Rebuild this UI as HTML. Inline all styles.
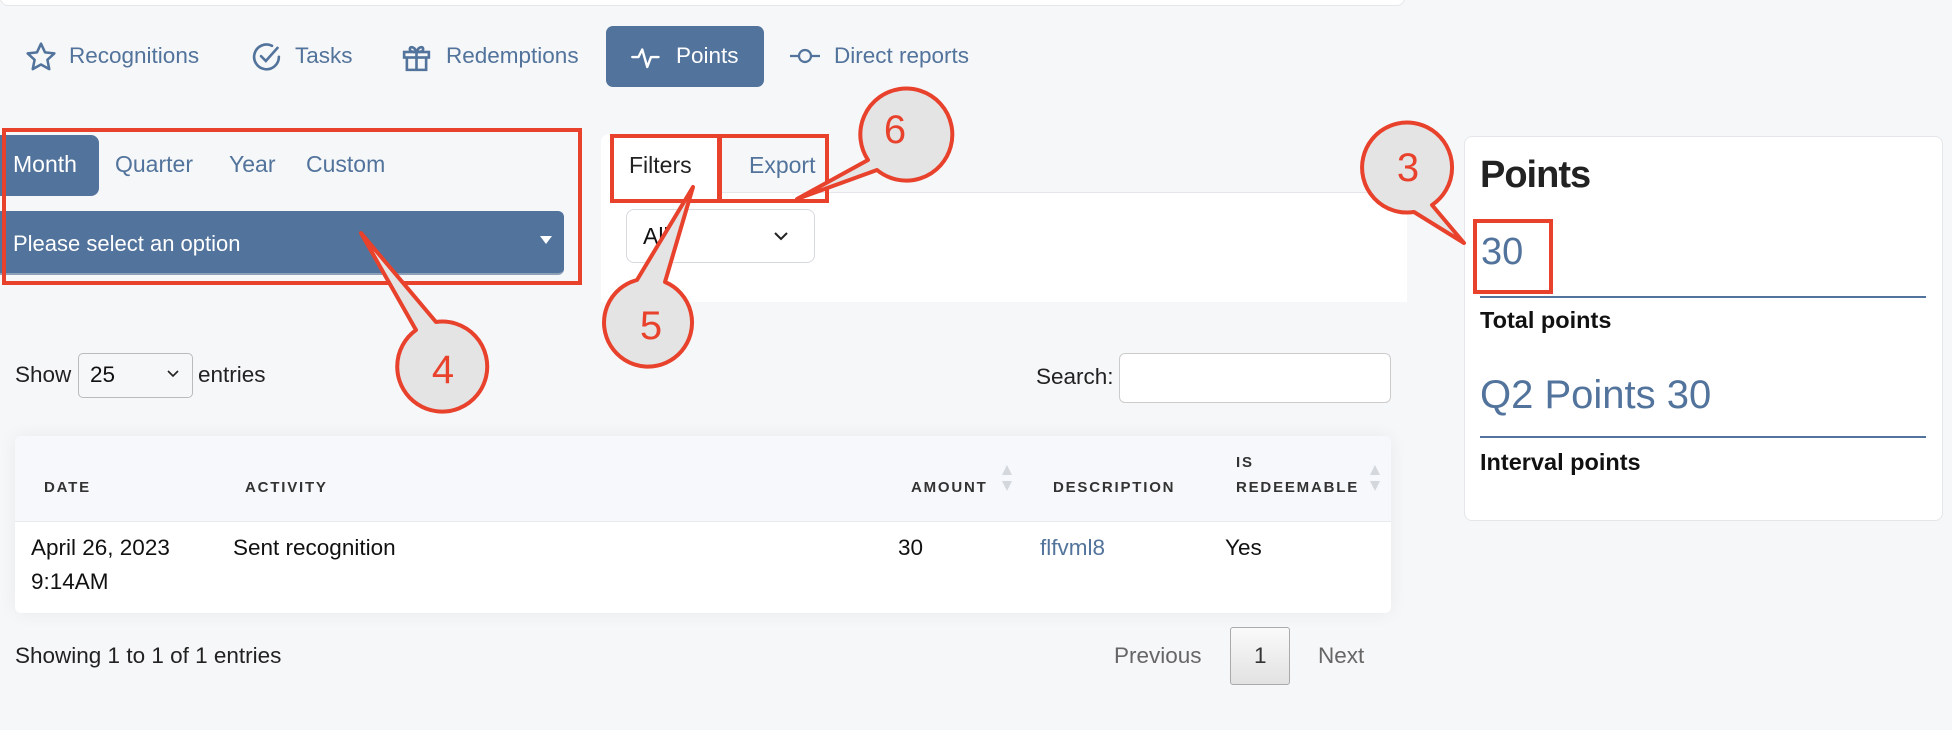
<!DOCTYPE html>
<html><head><meta charset="utf-8"><style>
*{box-sizing:border-box;margin:0;padding:0}
body{width:1952px;height:730px;background:#f6f7f9;font-family:"Liberation Sans",sans-serif;position:relative;overflow:hidden;color:#111}
.a{position:absolute;white-space:nowrap}
.blue{color:#52739b}
.nav{font-size:22.5px;color:#52739b;top:43px}
.th{font-size:15px;font-weight:bold;letter-spacing:1.8px;color:#333}
.td{font-size:22.5px;color:#111}
.rb{position:absolute;border:4px solid #e8412c}
</style></head><body>
<div class="a" style="left:0;top:-10px;width:1405px;height:16px;background:#fff;border:1px solid #e4e6ea;border-radius:8px"></div>

<!-- nav -->
<svg class="a" style="left:25px;top:41px" width="32" height="32" viewBox="0 0 24 24" fill="none" stroke="#52739b" stroke-width="1.9" stroke-linejoin="round"><path d="M12 2l3 6.5 7 .8-5.2 4.8 1.4 7L12 17.6 5.8 21.1l1.4-7L2 9.3l7-.8z"/></svg>
<div class="a nav" style="left:69px">Recognitions</div>
<svg class="a" style="left:250px;top:41px" width="33" height="33" viewBox="0 0 24 24" fill="none" stroke="#52739b" stroke-width="1.9" stroke-linecap="round"><path d="M21 11.5A9 9 0 1 1 16 3.5"/><path d="M8 11l3.5 3.5L20 5"/></svg>
<div class="a nav" style="left:295px">Tasks</div>
<svg class="a" style="left:400px;top:41px" width="33" height="33" viewBox="0 0 24 24" fill="none" stroke="#52739b" stroke-width="1.9"><rect x="3" y="8" width="18" height="4"/><path d="M5 12v9h14v-9M12 8v13M12 8C10 3 6 4 7.5 7 8 8 12 8 12 8zM12 8c2-5 6-4 4.5-1-.5 1-4.5 1-4.5 1z"/></svg>
<div class="a nav" style="left:446px">Redemptions</div>
<div class="a" style="left:606px;top:26px;width:158px;height:61px;background:#52739b;border-radius:7px"></div>
<svg class="a" style="left:630px;top:42px" width="32" height="30" viewBox="0 0 24 24" fill="none" stroke="#fff" stroke-width="1.9" stroke-linejoin="round" stroke-linecap="round"><path d="M1 12h5l3-6 4 14 3-8h6"/></svg>
<div class="a nav" style="left:676px;color:#fff">Points</div>
<svg class="a" style="left:789px;top:44px" width="32" height="24" viewBox="0 0 32 24" fill="none" stroke="#52739b" stroke-width="2.2"><path d="M1 12h8M23 12h8"/><circle cx="16" cy="12" r="6"/></svg>
<div class="a nav" style="left:834px">Direct reports</div>

<!-- period -->
<div class="a" style="left:0;top:135px;width:99px;height:61px;background:#52739b;border-radius:0 8px 8px 0"></div>
<div class="a" style="left:13px;top:151px;font-size:23px;color:#fff">Month</div>
<div class="a blue" style="left:115px;top:151px;font-size:23px">Quarter</div>
<div class="a blue" style="left:229px;top:151px;font-size:23px">Year</div>
<div class="a blue" style="left:306px;top:151px;font-size:23px">Custom</div>
<div class="a" style="left:0;top:211px;width:564px;height:64px;background:#52739b;border-radius:0 6px 6px 0;border-bottom:2px solid #8da0b8"></div>
<div class="a" style="left:13px;top:231px;font-size:22px;color:#fff">Please select an option</div>
<div class="a" style="left:540px;top:236px;width:0;height:0;border-left:6px solid transparent;border-right:6px solid transparent;border-top:8px solid #fff"></div>
<div class="rb" style="left:2px;top:128px;width:580px;height:157px"></div>

<!-- filters card -->
<div class="a" style="left:601px;top:134px;width:806px;height:168px;background:#fff;border-radius:8px 0 0 0"></div>
<div class="a" style="left:720px;top:134px;width:687px;height:59px;background:#f6f7f9;border-bottom:1px solid #e4e6ea"></div>
<div class="a" style="left:629px;top:152px;font-size:23px;color:#222">Filters</div>
<div class="a blue" style="left:749px;top:152px;font-size:23px">Export</div>
<div class="a" style="left:626px;top:209px;width:189px;height:54px;border:1px solid #d6d9de;border-radius:8px;background:#fff"></div>
<div class="a" style="left:643px;top:223px;font-size:23px">All</div>
<svg class="a" style="left:773px;top:230px" width="16" height="12" viewBox="0 0 16 12" fill="none" stroke="#222" stroke-width="2"><path d="M2 3l6 6 6-6"/></svg>
<div class="rb" style="left:610px;top:134px;width:111px;height:69px"></div>
<div class="rb" style="left:718px;top:134px;width:111px;height:69px"></div>

<!-- points card -->
<div class="a" style="left:1464px;top:136px;width:479px;height:385px;background:#fff;border:1px solid #e4e6ea;border-radius:8px"></div>
<div class="a" style="left:1480px;top:154px;font-size:38px;font-weight:bold;color:#222;letter-spacing:-1px">Points</div>
<div class="a blue" style="left:1481px;top:231px;font-size:38px">30</div>
<div class="rb" style="left:1473px;top:219px;width:80px;height:75px"></div>
<div class="a" style="left:1480px;top:296px;width:446px;height:2px;background:#52739b"></div>
<div class="a" style="left:1480px;top:307px;font-size:23.5px;font-weight:bold;color:#111">Total points</div>
<div class="a blue" style="left:1480px;top:373px;font-size:40px">Q2 Points 30</div>
<div class="a" style="left:1480px;top:436px;width:446px;height:2px;background:#52739b"></div>
<div class="a" style="left:1480px;top:449px;font-size:23.5px;font-weight:bold;color:#111">Interval points</div>

<!-- table controls -->
<div class="a" style="left:15px;top:362px;font-size:22.5px;color:#222">Show</div>
<div class="a" style="left:78px;top:353px;width:115px;height:45px;border:1px solid #bbb;border-radius:5px;background:#f6f7f9"></div>
<div class="a" style="left:90px;top:362px;font-size:22.5px">25</div>
<svg class="a" style="left:166px;top:369px" width="14" height="10" viewBox="0 0 14 10" fill="none" stroke="#222" stroke-width="1.6"><path d="M2 2l5 5 5-5"/></svg>
<div class="a" style="left:198px;top:362px;font-size:22.5px;color:#222">entries</div>
<div class="a" style="left:1036px;top:364px;font-size:22.5px;color:#222">Search:</div>
<div class="a" style="left:1119px;top:353px;width:272px;height:50px;border:1px solid #ccc;border-radius:6px;background:#fff"></div>

<!-- table -->
<div class="a" style="left:15px;top:436px;width:1376px;height:177px;background:#fff;border-radius:6px;box-shadow:0 0 18px rgba(0,0,0,0.06);overflow:hidden">
 <div style="height:86px;background:#f7f8fb;border-bottom:1px solid #e8eaee"></div>
</div>
<div class="a th" style="left:44px;top:479px">DATE</div>
<div class="a th" style="left:245px;top:479px">ACTIVITY</div>
<div class="a th" style="left:911px;top:479px">AMOUNT</div>
<div class="a th" style="left:1053px;top:479px">DESCRIPTION</div>
<div class="a th" style="left:1236px;top:454px">IS</div>
<div class="a th" style="left:1236px;top:479px">REDEEMABLE</div>
<svg class="a" style="left:1001px;top:465px" width="12" height="26" viewBox="0 0 12 26" fill="#d4d7dc"><path d="M6 0l5 10H1zM6 26l5-10H1z"/></svg>
<svg class="a" style="left:1369px;top:465px" width="12" height="26" viewBox="0 0 12 26" fill="#d4d7dc"><path d="M6 0l5 10H1zM6 26l5-10H1z"/></svg>
<div class="a td" style="left:31px;top:535px">April 26, 2023</div>
<div class="a td" style="left:31px;top:569px">9:14AM</div>
<div class="a td" style="left:233px;top:535px">Sent recognition</div>
<div class="a td" style="left:898px;top:535px">30</div>
<div class="a td" style="left:1040px;top:535px;color:#52739b">flfvml8</div>
<div class="a td" style="left:1225px;top:535px">Yes</div>

<div class="a" style="left:15px;top:643px;font-size:22.5px;color:#222">Showing 1 to 1 of 1 entries</div>
<div class="a" style="left:1114px;top:643px;font-size:22.5px;color:#666">Previous</div>
<div class="a" style="left:1230px;top:627px;width:60px;height:58px;border:1px solid #aaa;border-radius:3px;background:linear-gradient(#fafafa,#e2e2e2)"></div>
<div class="a" style="left:1254px;top:643px;font-size:22.5px;color:#333">1</div>
<div class="a" style="left:1318px;top:643px;font-size:22.5px;color:#666">Next</div>

<!-- callouts -->
<svg class="a" style="left:0;top:0" width="1952" height="730" fill="#e4e4e4" stroke="#e8412c" stroke-width="4" stroke-linejoin="round">
 <path d="M877 170 L797 199 L868 160 A46 46 0 1 1 877 170Z"/>
 <path d="M637 280 L693 187 L665 282 A44 44 0 1 1 637 280Z"/>
 <path d="M416 330 L361 233 L436 322 A45 45 0 1 1 416 330Z"/>
 <path d="M1432 205 L1464 243 L1414 212 A45 45 0 1 1 1432 205Z"/>
 <g fill="#e8412c" stroke="none" font-family="Liberation Sans,sans-serif" font-size="40" text-anchor="middle">
  <text x="895" y="143">6</text><text x="651" y="339">5</text><text x="443" y="383">4</text><text x="1408" y="181">3</text>
 </g>
</svg>
</body></html>
